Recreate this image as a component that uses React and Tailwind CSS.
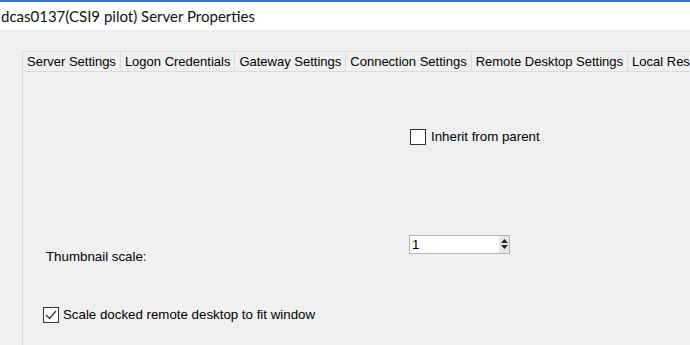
import { useState } from 'react';

const TABS = [
  'Server Settings',
  'Logon Credentials',
  'Gateway Settings',
  'Connection Settings',
  'Remote Desktop Settings',
  'Local Resources',
];

function Check({ checked }) {
  return (
    <span className="flex h-[16px] w-[16px] shrink-0 items-center justify-center border border-[#333] bg-white">
      {checked && (
        <svg width="12" height="10" viewBox="0 0 12 10" fill="none">
          <path d="M1 5 L4.5 8.5 L11 1" stroke="#333" strokeWidth="1.2" />
        </svg>
      )}
    </span>
  );
}

export default function App() {
  const [scale, setScale] = useState(1);
  const [inherit, setInherit] = useState(false);
  const [fit, setFit] = useState(true);

  return (
    <div
      className="h-[345px] w-[690px] overflow-hidden bg-[#f0f0f0] text-[13.3px] text-black"
      style={{ fontFamily: '"Liberation Sans", Arial, sans-serif' }}
    >
      <div className="h-[2px] bg-[#2b79d0]" />
      <div
        className="flex h-[28px] items-center bg-white pl-[1px] text-[15px] text-[#111]"
        style={{ fontFamily: 'Lato, "Noto Sans", sans-serif' }}
      >
        dcas0137(CSI9 pilot) Server Properties
      </div>

      <div className="pl-[22px] pt-[21px]">
        <div className="flex h-[21px] overflow-hidden whitespace-nowrap border-b border-[#dcdcdc] text-[13px]">
          {TABS.map((t) => (
            <div
              key={t}
              className="flex shrink-0 items-center border-t border-r border-[#dcdcdc] px-[4px] first:border-l"
            >
              {t}
            </div>
          ))}
        </div>

        <div className="h-[300px] border-l border-[#dcdcdc]">
          <div className="flex justify-start pl-[387px] pt-[55px]">
            <label className="flex cursor-default items-center gap-[5px]" onClick={() => setInherit(!inherit)}>
              <Check checked={inherit} />
              <span>Inherit from parent</span>
            </label>
          </div>

          <div className="flex pl-[23px] pt-[88px]">
            <span className="w-[363px] pt-[12px]">Thumbnail scale:</span>
            <div className="flex h-[19px] w-[101px] items-center border border-[#b4b4b4] bg-white">
              <input
                className="h-full w-full px-[2px] outline-none"
                value={scale}
                onChange={(e) => setScale(e.target.value)}
              />
              <div className="flex h-full w-[11px] flex-col items-center justify-center gap-[2px] bg-[#e6e6e6]">
                <svg width="7" height="4" viewBox="0 0 7 4"><path d="M0 4 L3.5 0 L7 4 Z" fill="#222" /></svg>
                <svg width="7" height="4" viewBox="0 0 7 4"><path d="M0 0 L3.5 4 L7 0 Z" fill="#222" /></svg>
              </div>
            </div>
          </div>

          <div className="pl-[20px] pt-[38px]">
            <label className="flex cursor-default items-center gap-[4px]" onClick={() => setFit(!fit)}>
              <Check checked={fit} />
              <span>Scale docked remote desktop to fit window</span>
            </label>
          </div>
        </div>
      </div>
    </div>
  );
}
